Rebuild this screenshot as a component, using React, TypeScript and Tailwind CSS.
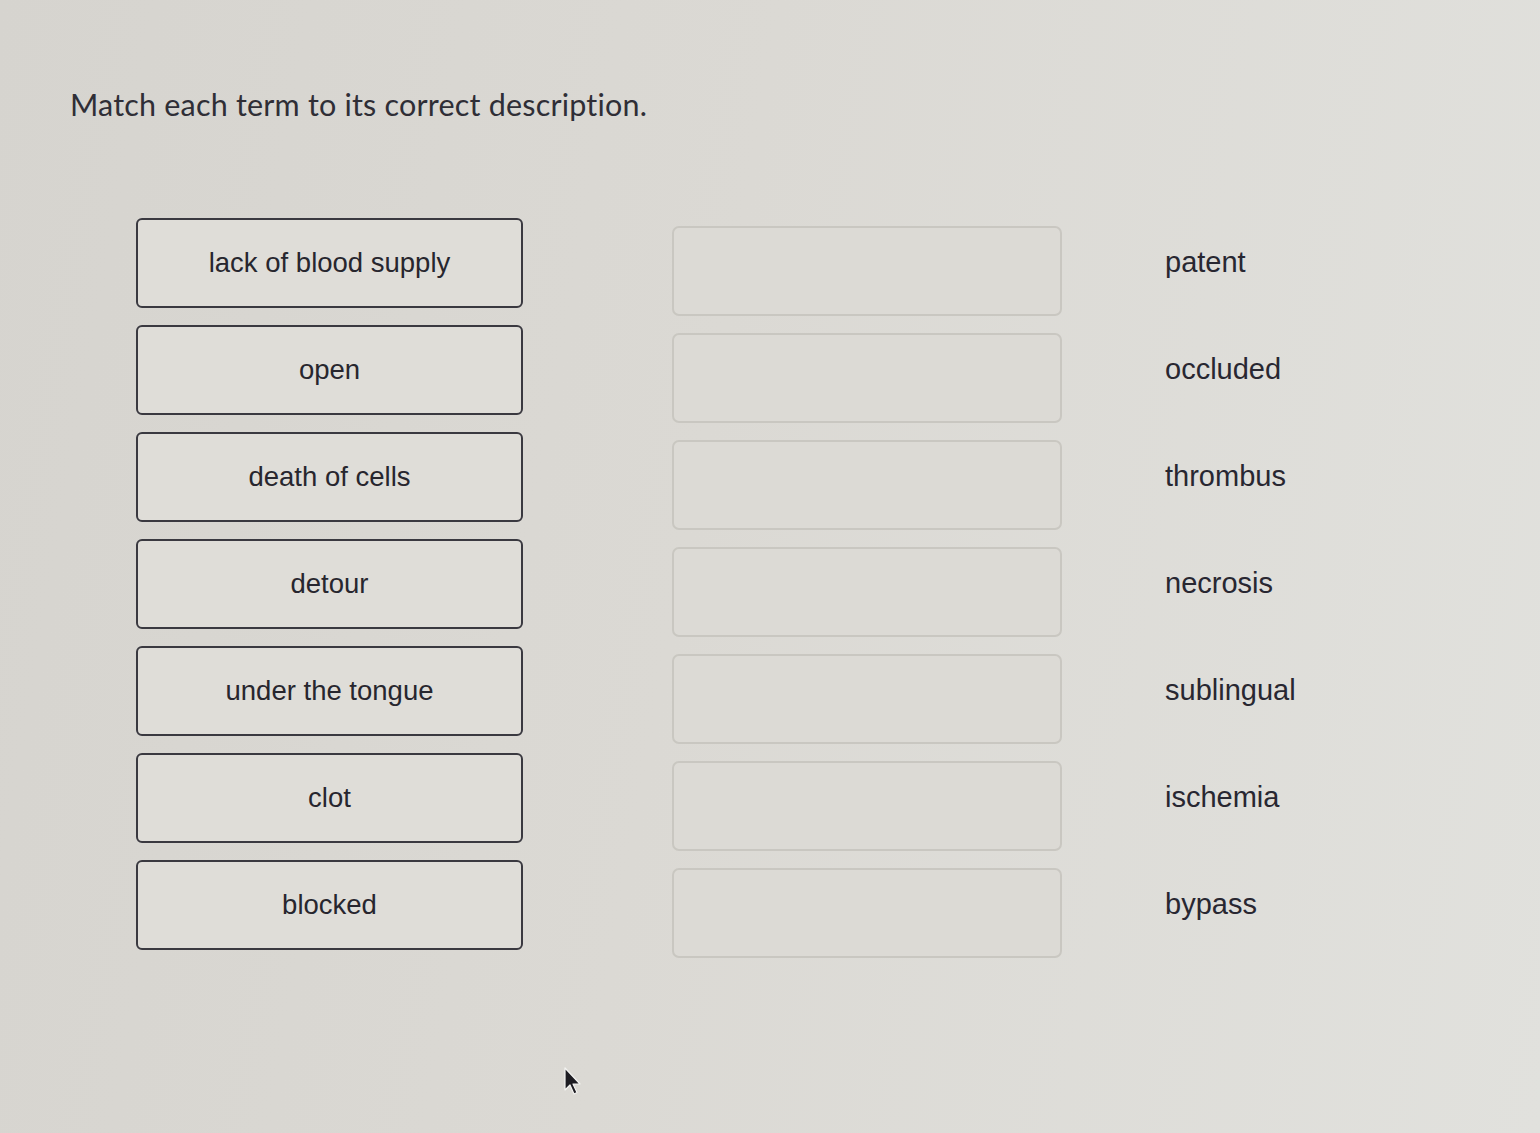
const terms = [
  "lack of blood supply",
  "open",
  "death of cells",
  "detour",
  "under the tongue",
  "clot",
  "blocked",
];

const answers = [
  "patent",
  "occluded",
  "thrombus",
  "necrosis",
  "sublingual",
  "ischemia",
  "bypass",
];

export default function App() {
  return (
    <div className="relative h-[1133px] w-[1540px] overflow-hidden bg-[linear-gradient(100deg,#d6d4cf_0%,#dbd9d4_45%,#e1e1dd_100%)] text-[#2b2a33]">
      <h1
        className="pl-[70px] pt-[86px] text-[30.5px] leading-[36px] font-normal tracking-[0.2px] text-[#2f2e36]"
        style={{ fontFamily: "Lato, 'Open Sans', sans-serif" }}
      >
        Match each term to its correct description.
      </h1>

      <div
        className="mt-[96px] flex pl-[136px]"
        style={{ fontFamily: "'Liberation Sans', Arial, sans-serif" }}
      >
        <div className="flex w-[387px] flex-col gap-[17px]">
          {terms.map((t) => (
            <div
              key={t}
              className="flex h-[90px] items-center justify-center rounded-[6px] border-2 border-[#3a3940] bg-[#dfddd8] text-[27.5px] text-[#27262e]"
            >
              {t}
            </div>
          ))}
        </div>

        <div className="ml-[149px] flex w-[390px] flex-col gap-[17px] pt-2">
          {terms.map((t) => (
            <div
              key={t}
              className="h-[90px] rounded-[7px] border-2 border-[#c9c7c1] bg-[#dcdad5]"
            />
          ))}
        </div>

        <div className="ml-[103px] flex flex-col gap-[17px]">
          {answers.map((a) => (
            <div
              key={a}
              className="flex h-[90px] items-center text-[29px] text-[#282731]"
            >
              {a}
            </div>
          ))}
        </div>
      </div>

      <svg
        className="absolute left-[563px] top-[1066px]"
        width="20"
        height="30"
        viewBox="0 0 20 30"
      >
        <path
          d="M2 2 L2 24 L7 19 L11 28 L14 26.5 L10 18 L17 18 Z"
          fill="#1d1c22"
          stroke="#f4f4f2"
          strokeWidth="1.2"
          strokeLinejoin="round"
        />
      </svg>
    </div>
  );
}
